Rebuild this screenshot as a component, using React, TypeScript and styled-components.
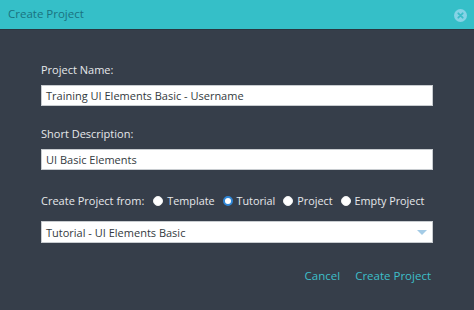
import styled, { createGlobalStyle } from 'styled-components';

const GlobalStyle = createGlobalStyle`
  html, body {
    margin: 0;
    padding: 0;
    background: #363e4a;
  }
  body {
    font-family: "Open Sans", "Noto Sans", sans-serif;
  }
`;

const sources = ['Template', 'Tutorial', 'Project', 'Empty Project'];

const CloseIcon = () => (
  <svg width="13" height="13" viewBox="0 0 13 13">
    <circle cx="6.5" cy="6.5" r="6.5" fill="#86d3e6" />
    <path d="M4.3 4.3 L8.7 8.7 M8.7 4.3 L4.3 8.7" stroke="#3bbdc8" strokeWidth="1.8" strokeLinecap="round" />
  </svg>
);

const App = () => {
  return (
    <Dialog>
      <GlobalStyle />
      <Header>
        <Title>Create Project</Title>
        <CloseButton>
          <CloseIcon />
        </CloseButton>
      </Header>
      <Body>
        <Field>
          <Label>Project Name:</Label>
          <Input>Training UI Elements Basic - Username</Input>
        </Field>
        <Field>
          <Label>Short Description:</Label>
          <Input>UI Basic Elements</Input>
        </Field>
        <SourceField>
          <RadioRow>
            <RowLabel>Create Project from:</RowLabel>
            {sources.map((s) => (
              <RadioOption key={s}>
                <Radio $checked={s === 'Tutorial'} />
                {s}
              </RadioOption>
            ))}
          </RadioRow>
          <Select>
            Tutorial - UI Elements Basic
            <Caret />
          </Select>
        </SourceField>
        <Actions>
          <LinkButton>Cancel</LinkButton>
          <LinkButton>Create Project</LinkButton>
        </Actions>
      </Body>
    </Dialog>
  );
};

const Dialog = styled.div`
  width: 474px;
  height: 310px;
  background: #363e4a;
  display: flex;
  flex-direction: column;
`;

const Header = styled.div`
  height: 29px;
  background: #35bfc8;
  border-bottom: 1px solid #2a3640;
  display: flex;
  align-items: center;
  justify-content: space-between;
  padding: 0 7px 0 8px;
`;

const Title = styled.div`
  margin-top: -1px;
  color: #1a7380;
  font-size: 11.5px;
  line-height: 16px;
`;

const CloseButton = styled.span`
  display: flex;
  margin-top: 1px;
`;

const Body = styled.div`
  padding: 32px 41px 0 41px;
  display: flex;
  flex-direction: column;
`;

const Field = styled.div`
  display: flex;
  flex-direction: column;
  margin-bottom: 20px;
`;

const SourceField = styled(Field)`
  margin-top: 3px;
  margin-bottom: 0;
`;

const Label = styled.div`
  color: #e6e8ea;
  font-size: 11px;
  line-height: 16px;
  margin-bottom: 7px;
  white-space: nowrap;
`;

const RowLabel = styled(Label)`
  margin: 0 9px 0 0;
`;

const Input = styled.div`
  height: 21px;
  background: #ffffff;
  border: 1px solid #c8ccd0;
  color: #333a40;
  font-size: 11px;
  line-height: 19px;
  padding: 0 4px;
  box-sizing: border-box;
  white-space: nowrap;
`;

const RadioRow = styled.div`
  display: flex;
  align-items: center;
  flex-wrap: nowrap;
  margin-bottom: 12px;
`;

const RadioOption = styled.span`
  display: inline-flex;
  align-items: center;
  color: #e6e8ea;
  font-size: 10.8px;
  line-height: 16px;
  margin-right: 8px;
  gap: 4px;
  white-space: nowrap;
`;

const Radio = styled.span<{ $checked?: boolean }>`
  width: 10px;
  height: 10px;
  border-radius: 50%;
  background: #ffffff;
  box-sizing: border-box;
  border: ${(p) => (p.$checked ? '2.5px solid #2f86d6' : '1px solid #f0f0f0')};
`;

const Select = styled(Input)`
  display: flex;
  justify-content: space-between;
  align-items: center;
  height: 22px;
`;

const Caret = styled.span`
  width: 0;
  height: 0;
  border-left: 5px solid transparent;
  border-right: 5px solid transparent;
  border-top: 5px solid #a4cbe6;
  margin-right: 1px;
`;

const Actions = styled.div`
  display: flex;
  justify-content: flex-end;
  gap: 15px;
  margin-top: 25px;
  padding-right: 2px;
`;

const LinkButton = styled.span`
  color: #3dbfc9;
  font-size: 11.5px;
  line-height: 16px;
`;

export default App;
